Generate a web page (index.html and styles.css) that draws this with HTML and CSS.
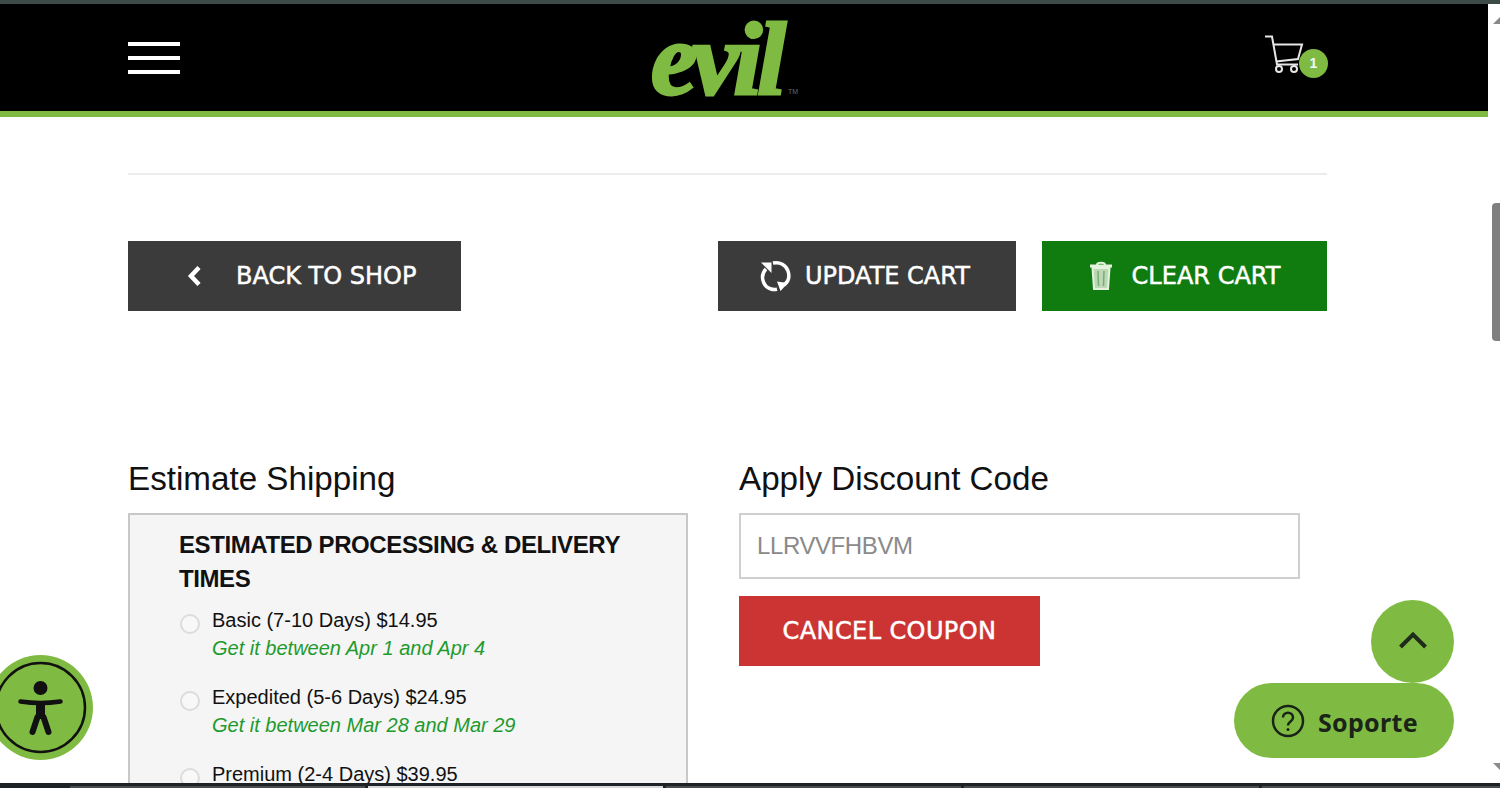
FILE: index.html

```html
<!DOCTYPE html>
<html lang="en">
<head>
  <meta charset="UTF-8">
  <title>Evil - Cart</title>
  <link rel="stylesheet" href="styles.css">
</head>
<body>

<div class="screen">
  <div class="top-strip"></div>

  <div class="window">
    <div class="page">
      <header class="site-header">
        <button class="menu-btn" aria-label="Menu"><span></span><span></span><span></span></button>
        <a class="logo" href="#">evil<span class="logo-tm">TM</span></a>
        <a class="cart-link" href="#">
          <svg class="cart-icon" viewBox="0 0 40 40" width="40" height="40" fill="none" stroke="#e6e6e6" stroke-width="2">
            <path d="M1 1.500h7l5 28h21"/>
            <path d="M9 9.500h29l-4 14.500-22 2.500"/>
            <circle cx="15" cy="34" r="3"/>
            <circle cx="30" cy="34" r="3"/>
          </svg>
          <span class="cart-count">1</span>
        </a>
      </header>

      <main class="content">
        <hr class="rule">

        <div class="cart-actions">
          <a class="btn btn-dark btn-back" href="#">
            <svg viewBox="0 0 16 24" width="16" height="24" fill="none" stroke="#fff" stroke-width="4.500"><path d="M13 3.500 5 12l8 8.500"/></svg>
            BACK TO SHOP
          </a>
          <div class="cart-actions-right">
            <a class="btn btn-dark btn-update" href="#">
              <svg viewBox="0 0 32 32" width="32" height="32" fill="none" stroke="#fff" stroke-width="3.500">
                <path d="M7 9C1 15 3 26 12 29c2 .7 4 .7 6 .3"/>
                <path d="M14 3c7-1.500 13 2 15 8 2 6 0 11-4 14"/>
                <path d="M2 2.500h10.500v10.500z" fill="#fff" stroke="none"/>
                <path d="M18 21.500l11 1.500-7.500 8z" fill="#fff" stroke="none"/>
              </svg>
              UPDATE CART
            </a>
            <a class="btn btn-green btn-clear" href="#">
              <svg viewBox="0 0 24 30" width="24" height="30" fill="none" stroke="#e4f3e0" stroke-width="2">
                <path d="M1 5h22" stroke-width="3"/>
                <path d="M8 4c0-3 8-3 8 0"/>
                <path d="M3.500 7l1.500 21h14l1.500-21z" fill="#bcd9b6"/>
                <path d="M9 10l.5 15M15 10l-.5 15" stroke="#7da977" stroke-width="1.500"/>
              </svg>
              CLEAR CART
            </a>
          </div>
        </div>

        <div class="forms">
          <section class="shipping">
            <h2>Estimate Shipping</h2>
            <div class="shipping-box">
              <h3>ESTIMATED PROCESSING &amp; DELIVERY TIMES</h3>
              <label class="ship-option">
                <span class="radio"></span>
                <span class="ship-text">
                  <span class="ship-name">Basic (7-10 Days) $14.95</span>
                  <em>Get it between Apr 1 and Apr 4</em>
                </span>
              </label>
              <label class="ship-option">
                <span class="radio"></span>
                <span class="ship-text">
                  <span class="ship-name">Expedited (5-6 Days) $24.95</span>
                  <em>Get it between Mar 28 and Mar 29</em>
                </span>
              </label>
              <label class="ship-option">
                <span class="radio"></span>
                <span class="ship-text">
                  <span class="ship-name">Premium (2-4 Days) $39.95</span>
                </span>
              </label>
            </div>
          </section>

          <section class="discount">
            <h2>Apply Discount Code</h2>
            <input class="coupon-input" type="text" placeholder="LLRVVFHBVM">
            <a class="btn btn-red" href="#">CANCEL COUPON</a>
          </section>
        </div>
      </main>
    </div>

    <div class="scrollbar">
      <span class="arrow arrow-up"></span>
      <span class="thumb"></span>
      <span class="arrow arrow-down"></span>
    </div>
  </div>

  <div class="bottom-strip">
    <span class="tab"></span>
    <span class="tab tab-active"></span>
    <span class="tab"></span>
    <span class="tab"></span>
    <span class="tab"></span>
  </div>

  <button class="a11y-btn" aria-label="Accessibility">
    <svg viewBox="0 0 105 105" width="105" height="105">
      <circle cx="52.500" cy="52.500" r="44.500" fill="none" stroke="#111" stroke-width="2.500"/>
      <circle cx="52.500" cy="33" r="7" fill="#111"/>
      <path d="M32.500 46.500c7 1 13 1.500 20 1.500s13-.5 20-1.500" fill="none" stroke="#111" stroke-width="4.500" stroke-linecap="round"/>
      <path d="M52.500 48v16" stroke="#111" stroke-width="9"/>
      <path d="M49.500 62l-5 15M55.500 62l5 15" stroke="#111" stroke-width="6" stroke-linecap="round" fill="none"/>
    </svg>
  </button>

  <button class="to-top" aria-label="Back to top">
    <svg viewBox="0 0 30 20" width="30" height="20" fill="none" stroke="#1f2a1a" stroke-width="4"><path d="M2.500 17 15 4.500 27.500 17"/></svg>
  </button>

  <button class="support">
    <svg viewBox="0 0 34 34" width="34" height="34" fill="none" stroke="#1b2418" stroke-width="2.500">
      <circle cx="17" cy="17" r="15"/>
      <path d="M12 13.500c0-6.500 10-6.500 10 0 0 4-5 4-5 8"/>
      <circle cx="17" cy="25.500" r="1.500" fill="#1b2418" stroke="none"/>
    </svg>
    <span class="support-label">Soporte</span>
  </button>
</div>

</body>
</html>
```

FILE: styles.css

```css
* {
  box-sizing: border-box;
}

html, body {
  margin: 0;
  padding: 0;
  height: 100%;
  overflow: hidden;
  background: #fff;
}

body {
  font-family: "Liberation Sans", Arial, sans-serif;
  color: #111;
}

a {
  text-decoration: none;
}

button {
  border: none;
  padding: 0;
  cursor: pointer;
}

.screen {
  position: relative;
  display: flex;
  flex-direction: column;
  height: 788px;
  overflow: hidden;
}

.top-strip {
  flex: 0 0 4px;
  background: #3c4a48;
}

.window {
  flex: 1;
  display: flex;
  min-height: 0;
}

.bottom-strip {
  flex: 0 0 5px;
  display: flex;
  gap: 3px;
  padding: 3px 0 0 70px;
  background: #1d2226;
}

.tab {
  flex: 0 0 295px;
  background: #4a4d50;
}

.tab-active {
  background: #d8d8d8;
}

.page {
  flex: 1;
  min-width: 0;
}

/* header */
.site-header {
  position: relative;
  display: flex;
  justify-content: space-between;
  align-items: center;
  height: 113px;
  padding: 0 160px 0 128px;
  background: #000;
  border-bottom: 6px solid #7fbb42;
}

.menu-btn {
  display: flex;
  flex-direction: column;
  gap: 10px;
  width: 52px;
  background: none;
}

.menu-btn span {
  display: block;
  height: 4px;
  background: #fff;
}

.logo {
  position: absolute;
  left: 651px;
  top: 10px;
  color: #7fbb42;
  font-family: "Liberation Serif", serif;
  font-size: 104px;
  font-weight: bold;
  font-style: italic;
  line-height: 90px;
  letter-spacing: -5px;
  -webkit-text-stroke: 3px #7fbb42;
}

.logo-tm {
  position: absolute;
  left: 137px;
  top: 74px;
  color: #666;
  font-family: "Liberation Sans", sans-serif;
  font-size: 7px;
  font-style: normal;
  font-weight: normal;
  line-height: 8px;
  letter-spacing: 0;
  -webkit-text-stroke: 0;
}

.cart-link {
  position: relative;
  display: block;
  width: 64px;
  height: 46px;
}

.cart-icon {
  display: block;
}

.cart-count {
  position: absolute;
  right: 0;
  bottom: 3px;
  width: 29px;
  height: 29px;
  border-radius: 50%;
  background: #7fbb42;
  color: #f2fbff;
  font-size: 14px;
  font-weight: bold;
  line-height: 29px;
  text-align: center;
}

/* content */
.content {
  width: 1199px;
  margin-left: 128px;
}

.rule {
  height: 2px;
  margin: 56px 0 0;
  border: none;
  background: #ececec;
}

.cart-actions {
  display: flex;
  justify-content: space-between;
  margin-top: 66px;
}

.cart-actions-right {
  display: flex;
  gap: 26px;
}

.btn {
  display: flex;
  align-items: center;
  justify-content: center;
  height: 70px;
  color: #fff;
  font-family: "DejaVu Sans", sans-serif;
  font-size: 24px;
  letter-spacing: 0;
  -webkit-text-stroke: 0.5px #fff;
}

.btn-dark {
  background: #3b3b3b;
}

.btn-green {
  background: #107c10;
}

.btn-red {
  width: 301px;
  margin-top: 17px;
  background: #cc3333;
  letter-spacing: 0.4px;
}

.btn-back {
  justify-content: flex-start;
  width: 333px;
  padding-left: 58px;
  gap: 34px;
}

.btn-update {
  justify-content: flex-start;
  width: 298px;
  padding-left: 41px;
  gap: 14px;
}

.btn-clear {
  width: 285px;
  gap: 19px;
}

/* forms */
.forms {
  display: flex;
  margin-top: 148px;
}

.shipping {
  width: 611px;
}

.discount {
  width: 561px;
}

h2 {
  margin: 0 0 15px;
  padding-top: 1px;
  font-size: 33.2px;
  font-weight: normal;
  line-height: 38px;
}

.shipping-box {
  width: 560px;
  height: 300px;
  padding: 13px 40px 0 49px;
  background: #f5f5f5;
  border: 2px solid #c8c8c8;
}

h3 {
  margin: 0 0 12px;
  font-size: 24px;
  line-height: 34px;
  font-weight: bold;
  letter-spacing: -0.4px;
}

.ship-option {
  display: flex;
  gap: 12px;
  margin-bottom: 24px;
}

.radio {
  flex: none;
  width: 20px;
  height: 20px;
  margin: 6px 0 0 1px;
  border: 2px solid #dcdcdc;
  border-radius: 50%;
  background: #f8f8f8;
}

.ship-text {
  display: flex;
  flex-direction: column;
  gap: 3px;
  font-size: 20px;
  line-height: 25px;
}

.ship-text em {
  color: #1f9a2e;
}

.coupon-input {
  display: block;
  width: 561px;
  height: 66px;
  padding: 0 16px;
  border: 2px solid #cfcfcf;
  font-family: inherit;
  font-size: 24px;
  letter-spacing: -0.4px;
  outline: none;
}

.coupon-input::placeholder {
  color: #8a8a8a;
  opacity: 1;
}

/* fake scrollbar */
.scrollbar {
  position: relative;
  flex: 0 0 12px;
  background: #fff;
}

.thumb {
  position: absolute;
  top: 199px;
  right: 0;
  width: 8px;
  height: 138px;
  border-radius: 4px 0 0 4px;
  background: #7f7f7f;
}

.arrow {
  position: absolute;
  right: 0;
  width: 0;
  height: 0;
  border-left: 7px solid transparent;
}

.arrow-up {
  top: 13px;
  border-bottom: 7px solid #8a8a8a;
}

.arrow-down {
  bottom: 13px;
  border-top: 7px solid #8a8a8a;
}

/* floating buttons */
.a11y-btn {
  position: absolute;
  left: -12px;
  top: 655px;
  width: 105px;
  height: 105px;
  border-radius: 50%;
  background: #7fbb42;
}

.a11y-btn svg {
  display: block;
}

.to-top {
  position: absolute;
  left: 1371px;
  top: 600px;
  display: flex;
  align-items: center;
  justify-content: center;
  width: 83px;
  height: 83px;
  padding-bottom: 4px;
  border-radius: 50%;
  background: #7fbb42;
}

.support {
  position: absolute;
  left: 1234px;
  top: 683px;
  display: flex;
  align-items: center;
  gap: 13px;
  width: 220px;
  height: 75px;
  padding-left: 37px;
  border-radius: 38px;
  background: #7fbb42;
  color: #1b2418;
  font-family: "Noto Sans", sans-serif;
  font-size: 25px;
  font-weight: 700;
  letter-spacing: 0.3px;
}

.support-label {
  margin-top: 3px;
}
```
